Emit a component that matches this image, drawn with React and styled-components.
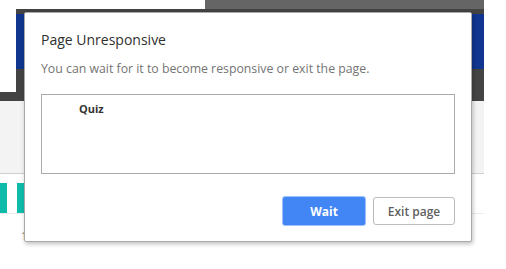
import styled, { createGlobalStyle } from "styled-components";

const Global = createGlobalStyle`
  html, body {
    margin: 0;
    padding: 0;
    background: #ffffff;
    overflow: hidden;
  }
  * {
    box-sizing: border-box;
  }
`;

const Page = styled.div`
  position: relative;
  width: 506px;
  height: 269px;
  background: #ffffff;
  font-family: "Open Sans", "Noto Sans", sans-serif;
`;

const TopStrip = styled.div`
  display: flex;
  height: 9px;
`;

const Blank = styled.div`
  width: ${(p) => p.w}px;
`;

const GreyTab = styled.div`
  width: 279px;
  background: #656565;
`;

const Frame = styled.div`
  width: 468px;
  height: 83px;
  margin-left: 16px;
  padding-top: 5px;
  background: #434343;
`;

const BlueBand = styled.div`
  height: 55px;
  background: #10368f;
`;

const DarkBar = styled.div`
  width: 484px;
  height: 9px;
  background: #434343;
`;

const Toolbar = styled.div`
  width: 484px;
  height: 73px;
  background: #f3f3f3;
  border-bottom: 1px solid #cfcfcf;
`;

const Tiles = styled.div`
  display: flex;
  gap: 10px;
  margin-top: 9px;
  width: 484px;
  height: 31px;
  border-bottom: 1px solid #ececec;
`;

const Tile = styled.div`
  width: ${(p) => p.w}px;
  background: #0fbcac;
`;

const Labels = styled.div`
  display: flex;
  gap: 40px;
  padding: 14px 0 0 21px;
  font-size: 11px;
  color: #777777;
  line-height: 16px;
`;

const Dialog = styled.div`
  position: absolute;
  left: 24px;
  top: 12px;
  width: 448px;
  height: 230px;
  padding: 17px 16px 15px 16px;
  display: flex;
  flex-direction: column;
  background: #ffffff;
  border: 1px solid #a9a9a9;
  border-radius: 2px;
  box-shadow: 1px 2px 4px rgba(0, 0, 0, 0.25);
`;

const Title = styled.h1`
  margin: 0;
  font-size: 14px;
  font-weight: 400;
  line-height: 20px;
  color: #303030;
`;

const Message = styled.p`
  margin: 10px 0 0 0;
  font-size: 12.3px;
  line-height: 18px;
  color: #747474;
`;

const PageList = styled.div`
  margin-top: 16px;
  height: 80px;
  border: 1px solid #ababab;
  padding: 6px 0 0 37px;
`;

const PageItem = styled.div`
  font-size: 11px;
  font-weight: 700;
  line-height: 16px;
  color: #333333;
`;

const Buttons = styled.div`
  margin-top: auto;
  display: flex;
  justify-content: flex-end;
  align-items: center;
  gap: 7px;
`;

const Button = styled.button`
  height: ${(p) => (p.primary ? 30 : 28)}px;
  width: ${(p) => (p.primary ? 84 : 82)}px;
  padding: 0;
  font-family: "Open Sans", "Noto Sans", sans-serif;
  font-size: 12px;
  font-weight: ${(p) => (p.primary ? 700 : 600)};
  color: ${(p) => (p.primary ? "#ffffff" : "#5f5f5f")};
  background: ${(p) => (p.primary ? "#4285f4" : "#ffffff")};
  border: 1px solid ${(p) => (p.primary ? "#9fc0fa" : "#bcbcbc")};
  border-radius: 3px;
`;

export default function App() {
  return (
    <Page>
      <Global />
      <TopStrip>
        <Blank w={205} />
        <GreyTab />
      </TopStrip>
      <Frame>
        <BlueBand />
      </Frame>
      <DarkBar />
      <Toolbar />
      <Tiles>
        <Tile w={7} />
        <Tile w={60} />
      </Tiles>
      <Labels>
        <span>1</span>
        <span>2</span>
        <span>3</span>
        <span>4</span>
        <span>5</span>
      </Labels>
      <Dialog>
        <Title>Page Unresponsive</Title>
        <Message>You can wait for it to become responsive or exit the page.</Message>
        <PageList>
          <PageItem>Quiz</PageItem>
        </PageList>
        <Buttons>
          <Button primary>Wait</Button>
          <Button>Exit page</Button>
        </Buttons>
      </Dialog>
    </Page>
  );
}
